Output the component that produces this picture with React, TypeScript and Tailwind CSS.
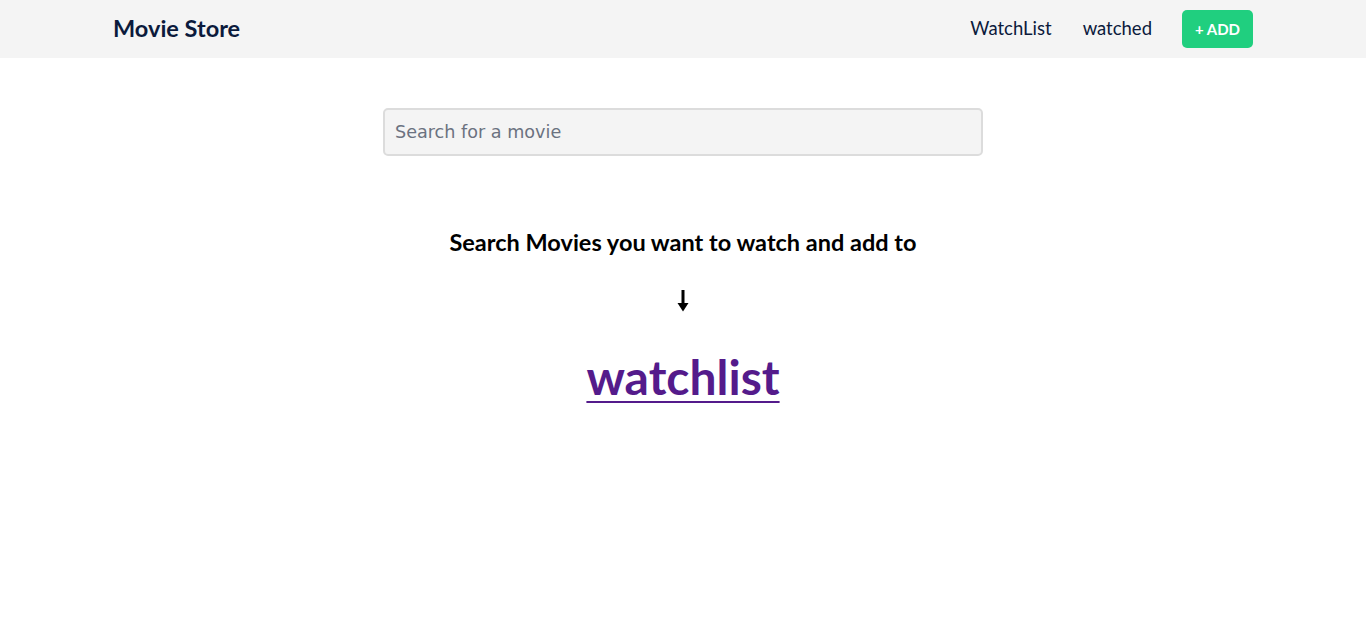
import React from 'react';

const sans = { fontFamily: '"Source Sans Pro", Lato, "Open Sans", sans-serif' };

function Navbar() {
  return (
    <header className="bg-[#f4f4f4] h-[58px]">
      <div className="mx-auto w-[1140px] h-full flex items-center justify-between">
        <a href="#" className="text-[23.5px] font-bold text-[#0b1a3c]">
          Movie Store
        </a>
        <nav className="flex items-center">
          <a href="#" className="text-[18.5px] text-[#0b1a3c] mr-[31px]">
            WatchList
          </a>
          <a href="#" className="text-[18.5px] text-[#0b1a3c] mr-[30px]">
            watched
          </a>
          <a
            href="#"
            className="h-[38px] w-[71px] flex items-center justify-center rounded-[5px] bg-[#20cf7f] text-white text-[15px] font-bold"
          >
            + ADD
          </a>
        </nav>
      </div>
    </header>
  );
}

function ArrowDown() {
  return (
    <svg width="12" height="22" viewBox="0 0 12 22" className="mx-auto block">
      <rect x="4.5" y="0" width="3" height="14" fill="#000" />
      <polygon points="0.5,13 11.5,13 6,21.5" fill="#000" />
    </svg>
  );
}

export default function App() {
  return (
    <div className="min-h-screen bg-white" style={sans}>
      <Navbar />
      <main className="flex flex-col items-center">
        <input
          type="text"
          placeholder="Search for a movie"
          className="mt-[50px] w-[600px] h-[48px] rounded-[5px] border-2 border-[#dcdcdc] bg-[#f4f4f4] px-[10px] text-[#333] placeholder:text-[#6b7280] outline-none"
          style={{ fontFamily: '"DejaVu Sans", Verdana, sans-serif', fontSize: '17.6px' }}
        />
        <h2 className="mt-[72px] text-[23.5px] font-bold text-black leading-[28px]">
          Search Movies you want to watch and add to
        </h2>
        <div className="mt-[34px]">
          <ArrowDown />
        </div>
        <a
          href="#"
          className="mt-[37px] text-[48px] font-bold leading-[56px] text-[#541b8b] underline decoration-[2px] underline-offset-[6px]"
        >
          watchlist
        </a>
      </main>
    </div>
  );
}
